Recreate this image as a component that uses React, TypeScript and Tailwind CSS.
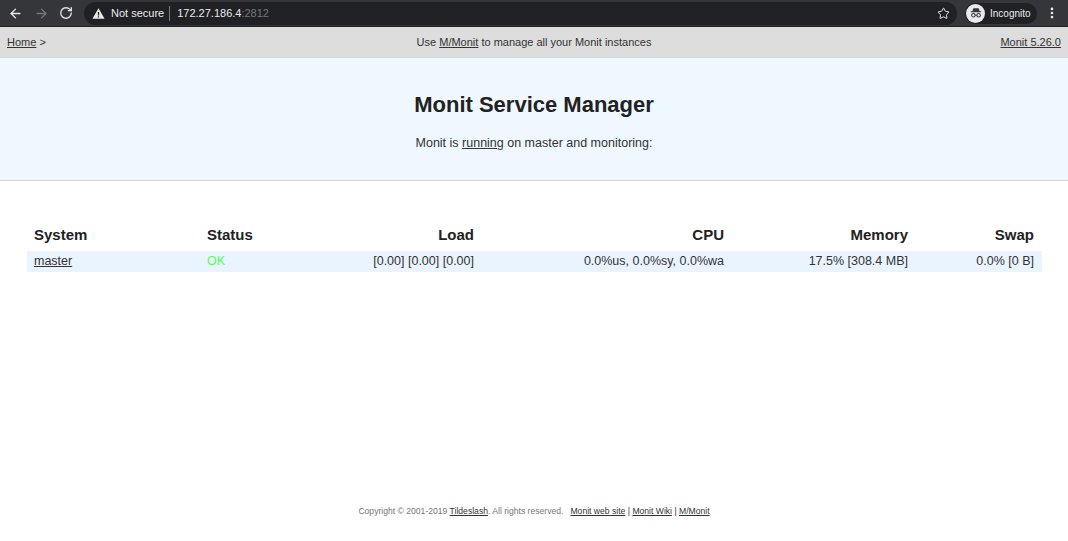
import { ArrowLeft, ArrowRight, RotateCw, Star, MoreVertical } from "lucide-react";

const columns = "grid grid-cols-[173px_100px_181px_250px_184px_127px]";
const cell = "px-[7px]";

function BrowserBar() {
  return (
    <div className="h-[27px] bg-[#35363a] flex items-center text-[#e8eaed] border-b border-[#202124]">
      <div className="flex items-center w-[84px] shrink-0 pl-[8px] gap-[11px]">
        <ArrowLeft size={15} strokeWidth={2.2} />
        <ArrowRight size={15} strokeWidth={2.2} className="text-[#75777b]" />
        <RotateCw size={14} strokeWidth={2.2} className="-ml-px" />
      </div>
      <div className="w-[873px] h-[23px] rounded-full bg-[#202124] flex items-center text-[11px] shrink-0">
        <svg viewBox="0 0 16 16" className="w-[13px] h-[13px] ml-[8px] fill-[#e8eaed]">
          <path fillRule="evenodd" d="M8 1.5 15.5 14.5H.5ZM7.2 6.2V10.4H8.8V6.2ZM7.2 11.3V12.9H8.8V11.3Z" />
        </svg>
        <span className="ml-[6px]">Not secure</span>
        <span className="ml-[5px] mr-[7px] w-px h-[15px] bg-[#7a7c80]" />
        <span>172.27.186.4</span>
        <span className="text-[#75777b]">:2812</span>
        <Star size={13} strokeWidth={1.8} className="ml-auto mr-[7px]" />
      </div>
      <div className="ml-[8px] w-[72px] h-[21px] shrink-0 rounded-full bg-[#202124] flex items-center text-[10px]">
        <span className="w-[19px] h-[19px] ml-px rounded-full bg-[#e8eaed] flex items-center justify-center">
          <svg viewBox="0 0 16 16" className="w-[14px] h-[14px] fill-[#35363a]">
            <path d="M5 2.5h6l1.2 3.5H14v1H2V6h1.8Z" />
            <circle cx="5" cy="10.5" r="2" fill="none" stroke="#35363a" strokeWidth="1.2" />
            <circle cx="11" cy="10.5" r="2" fill="none" stroke="#35363a" strokeWidth="1.2" />
            <path d="M7 10h2v1H7Z" />
          </svg>
        </span>
        <span className="ml-[5px]">Incognito</span>
      </div>
      <MoreVertical size={14} strokeWidth={2.6} className="ml-[8px]" />
    </div>
  );
}

export default function App() {
  return (
    <div className="min-h-[541px] bg-white text-[#222] font-['Liberation_Sans',Arial,sans-serif] flex flex-col">
      <BrowserBar />

      <div className="h-[31px] bg-[#dddddd] border-b border-[#cfd8e4] grid grid-cols-3 items-center px-[7px] text-[11px] text-[#333]">
        <div>
          <a href="#" className="underline">Home</a> &gt;
        </div>
        <div className="text-center whitespace-nowrap">
          Use <a href="#" className="underline">M/Monit</a> to manage all your Monit instances
        </div>
        <div className="text-right">
          <a href="#" className="underline">Monit 5.26.0</a>
        </div>
      </div>

      <div className="h-[123px] bg-[#eff7ff] border-b border-[#d4d4d4] flex flex-col items-center pt-[33px]">
        <h1 className="text-[22px] leading-[28px] font-bold">Monit Service Manager</h1>
        <p className="mt-[16px] text-[12.5px] leading-[16px] text-[#333]">
          Monit is <a href="#" className="underline">running</a> on master and monitoring:
        </p>
      </div>

      <div className="mx-[27px] mt-[43px] w-[1015px]">
        <div className={`${columns} text-[15px] font-bold h-[27px] items-start pt-px leading-[20px]`}>
          <div className={cell}>System</div>
          <div className={cell}>Status</div>
          <div className={`${cell} text-right`}>Load</div>
          <div className={`${cell} text-right`}>CPU</div>
          <div className={`${cell} text-right`}>Memory</div>
          <div className="pl-[7px] pr-[8px] text-right">Swap</div>
        </div>
        <div className={`${columns} h-[21px] bg-[#eaf4fe] items-center text-[12.5px] text-[#333]`}>
          <div className={cell}>
            <a href="#" className="underline">master</a>
          </div>
          <div className={`${cell} text-[#55ff55]`}>OK</div>
          <div className={`${cell} text-right`}>[0.00] [0.00] [0.00]</div>
          <div className={`${cell} text-right`}>0.0%us, 0.0%sy, 0.0%wa</div>
          <div className={`${cell} text-right`}>17.5% [308.4 MB]</div>
          <div className="pl-[7px] pr-[8px] text-right">0.0% [0 B]</div>
        </div>
      </div>

      <div className="mt-[233px] text-center text-[8.6px] leading-[12px] text-[#777]">
        Copyright © 2001-2019 <a href="#" className="underline text-[#333]">Tildeslash</a>. All rights reserved.
        <span className="ml-[7px] text-[#333]">
          <a href="#" className="underline">Monit web site</a> | <a href="#" className="underline">Monit Wiki</a> | <a href="#" className="underline">M/Monit</a>
        </span>
      </div>
    </div>
  );
}
